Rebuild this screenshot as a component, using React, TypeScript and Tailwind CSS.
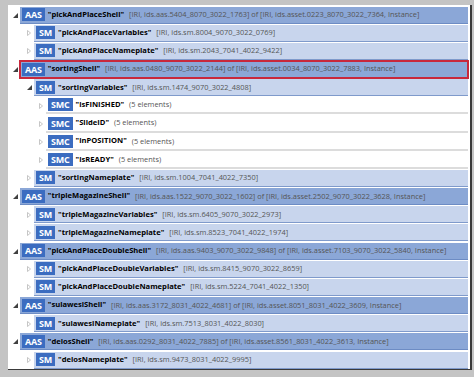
type Row = {
  level: 0 | 1 | 2
  kind: 'AAS' | 'SM' | 'SMC'
  name: string
  info: string
  open?: boolean
  selected?: boolean
}

const rows: Row[] = [
  { level: 0, kind: 'AAS', name: 'pickAndPlaceShell', info: '[IRI, ids.aas.5404_8070_3022_1763] of [IRI, ids.asset.0223_8070_3022_7364, Instance]', open: true },
  { level: 1, kind: 'SM', name: 'pickAndPlaceVariables', info: '[IRI, ids.sm.8004_9070_3022_0769]' },
  { level: 1, kind: 'SM', name: 'pickAndPlaceNameplate', info: '[IRI, ids.sm.2043_7041_4022_9422]' },
  { level: 0, kind: 'AAS', name: 'sortingShell', info: '[IRI, ids.aas.0480_9070_3022_2144] of [IRI, ids.asset.0034_8070_3022_7883, Instance]', open: true, selected: true },
  { level: 1, kind: 'SM', name: 'sortingVariables', info: '[IRI, ids.sm.1474_9070_3022_4808]', open: true },
  { level: 2, kind: 'SMC', name: 'isFINISHED', info: '(5 elements)' },
  { level: 2, kind: 'SMC', name: 'SlideID', info: '(5 elements)' },
  { level: 2, kind: 'SMC', name: 'inPOSITION', info: '(5 elements)' },
  { level: 2, kind: 'SMC', name: 'isREADY', info: '(5 elements)' },
  { level: 1, kind: 'SM', name: 'sortingNameplate', info: '[IRI, ids.sm.1004_7041_4022_7350]' },
  { level: 0, kind: 'AAS', name: 'tripleMagazineShell', info: '[IRI, ids.aas.1522_9070_3022_1602] of [IRI, ids.asset.2502_9070_3022_3628, Instance]', open: true },
  { level: 1, kind: 'SM', name: 'tripleMagazineVariables', info: '[IRI, ids.sm.6405_9070_3022_2973]' },
  { level: 1, kind: 'SM', name: 'tripleMagazineNameplate', info: '[IRI, ids.sm.8523_7041_4022_1974]' },
  { level: 0, kind: 'AAS', name: 'pickAndPlaceDoubleShell', info: '[IRI, ids.aas.9403_9070_3022_9848] of [IRI, ids.asset.7103_9070_3022_5840, Instance]', open: true },
  { level: 1, kind: 'SM', name: 'pickAndPlaceDoubleVariables', info: '[IRI, ids.sm.8415_9070_3022_8659]' },
  { level: 1, kind: 'SM', name: 'pickAndPlaceDoubleNameplate', info: '[IRI, ids.sm.5224_7041_4022_1350]' },
  { level: 0, kind: 'AAS', name: 'sulawesiShell', info: '[IRI, ids.aas.3172_8031_4022_4681] of [IRI, ids.asset.8051_8031_4022_3609, Instance]', open: true },
  { level: 1, kind: 'SM', name: 'sulawesiNameplate', info: '[IRI, ids.sm.7513_8031_4022_8030]' },
  { level: 0, kind: 'AAS', name: 'delosShell', info: '[IRI, ids.aas.0292_8031_4022_7885] of [IRI, ids.asset.8561_8031_4022_3613, Instance]', open: true },
  { level: 1, kind: 'SM', name: 'delosNameplate', info: '[IRI, ids.sm.9473_8031_4022_9995]' },
]

function Expander({ open }: { open?: boolean }) {
  if (open) {
    return (
      <svg width="5" height="5" viewBox="0 0 5 5" className="shrink-0">
        <path d="M5 0 L5 5 L0 5 Z" fill="#404040" />
      </svg>
    )
  }
  return (
    <svg width="4" height="6" viewBox="0 0 4 6" className="shrink-0">
      <path d="M0.5 0.5 L3.5 3 L0.5 5.5 Z" fill="none" stroke="#b8b8b8" strokeWidth="0.8" />
    </svg>
  )
}

function TreeRow({ row }: { row: Row }) {
  const indent = row.level === 0 ? 'pl-[2px]' : row.level === 1 ? 'pl-[16px]' : 'pl-[28px]'
  const bar =
    row.kind === 'AAS'
      ? 'bg-[#8ba7d7] border-b border-[#6d8cc4]'
      : row.kind === 'SM'
        ? 'bg-[#c8d5ed] border-b border-[#7f9acb]'
        : 'bg-white border-b-2 border-[#dcdcdc]'
  return (
    <div className={`flex items-center h-[18.2px] ${indent}`}>
      <div className="w-[10px] flex justify-center items-center">
        <Expander open={row.open} />
      </div>
      <div
        className={`flex-1 h-[17px] mr-[2px] flex items-center pl-[2px] ${bar} ${
          row.selected ? 'outline-2 outline-[#c8283c] -outline-offset-1' : ''
        }`}
      >
        <span className="bg-[#3b6cc0] text-white font-bold text-[9px] leading-[13px] h-[13px] px-[3px] tracking-[-0.2px]">
          {row.kind}
        </span>
        <span className="ml-[3px] font-bold text-black text-[7.6px] whitespace-nowrap">
          &quot;{row.name}&quot;
        </span>
        <span className="ml-[5px] text-[#555] text-[7.4px] whitespace-nowrap">{row.info}</span>
      </div>
    </div>
  )
}

export default function App() {
  return (
    <div
      className="w-[474px] h-[377px] bg-[#c4c4c4] overflow-hidden pl-[8px] pt-[5px]"
      style={{ fontFamily: '"Open Sans", "Noto Sans", sans-serif' }}
    >
      <div className="w-[464px] h-[365px] bg-white border-r-2 border-b border-[#3a3a3a] pt-[1px] flex flex-col">
        {rows.map((row, i) => (
          <TreeRow key={i} row={row} />
        ))}
      </div>
    </div>
  )
}
